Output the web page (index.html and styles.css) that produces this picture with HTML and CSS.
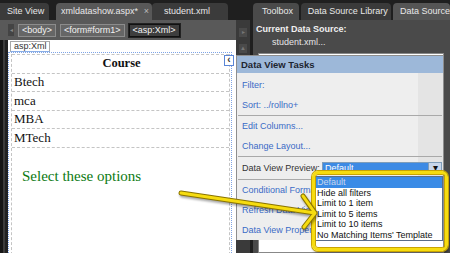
FILE: index.html
```html
<!DOCTYPE html>
<html>
<head>
<meta charset="utf-8">
<link rel="stylesheet" href="styles.css">
</head>
<body>
<div class="app">
  <div class="editor">
    <div class="tabs">
      <div class="tab tab-site">Site View</div>
      <div class="tab tab-active">xmldatashow.aspx*<span class="close">×</span></div>
      <div class="tab tab-student">student.xml</div>
    </div>
    <div class="editor-body">
      <div class="main-col">
        <div class="crumbs">
          <span class="crumb-arrow">◂</span>
          <span class="crumb">&lt;body&gt;</span>
          <span class="crumb">&lt;form#form1&gt;</span>
          <span class="crumb crumb-sel">&lt;asp:Xml&gt;</span>
        </div>
        <div class="doc-area">
          <div class="gutter"></div>
          <div class="doc">
            <div class="xml-label">asp:Xml</div>
            <div class="xml-box">
              <div class="xml-inner">
                <table class="grid">
                  <tr><th>Course</th></tr>
                  <tr><td>Btech</td></tr>
                  <tr><td>mca</td></tr>
                  <tr><td>MBA</td></tr>
                  <tr><td>MTech</td></tr>
                </table>
                <p class="note">Select these options</p>
              </div>
            </div>
          </div>
        </div>
      </div>
      <div class="strip">
        <span class="strip-btn strip-right">▸</span>
        <span class="strip-btn strip-up">▲</span>
      </div>
    </div>
  </div>
  <div class="side">
    <div class="tabs side-tabs">
      <div class="tab tab-toolbox">Toolbox</div>
      <div class="tab tab-lib">Data Source Library</div>
      <div class="tab tab-ds">Data Source</div>
    </div>
    <div class="panel">
      <div class="ds-title">Current Data Source:</div>
      <div class="ds-name">student.xml...</div>
      <div class="ds-box"></div>
    </div>
  </div>

  <div class="smart-btn">‹</div>
  <div class="tasks">
    <div class="tasks-head">Data View Tasks</div>
    <div class="tasks-body">
      <div class="task">Filter:</div>
      <div class="task">Sort: ../rollno+</div>
      <div class="sep"></div>
      <div class="task">Edit Columns...</div>
      <div class="task">Change Layout...</div>
      <div class="sep"></div>
      <div class="task task-preview">
        <span class="preview-label">Data View Preview:</span>
        <span class="select"><span class="select-value">Default</span><span class="select-btn">▾</span></span>
      </div>
      <div class="sep"></div>
      <div class="task">Conditional Formatting...</div>
      <div class="task">Refresh Data View</div>
      <div class="task">Data View Properties...</div>
    </div>
  </div>

  <ul class="options">
    <li class="opt-sel">Default</li>
    <li>Hide all filters</li>
    <li>Limit to 1 item</li>
    <li>Limit to 5 items</li>
    <li>Limit to 10 items</li>
    <li>No Matching Items' Template</li>
  </ul>

  <div class="highlight"></div>
  <svg class="arrow" width="450" height="253" viewBox="0 0 450 253">
    <g fill="none" stroke-linecap="round" stroke-linejoin="round">
      <path d="M181 193 L315 213 M303 196 L315 213 L304 227" stroke="#8a7400" stroke-width="5"/>
      <path d="M181 193 L315 213 M303 196 L315 213 L304 227" stroke="#f6dc10" stroke-width="3"/>
    </g>
  </svg>
</div>
</body>
</html>
```

FILE: styles.css
```css
* { box-sizing: border-box; }
html, body { margin: 0; padding: 0; }
body {
  width: 450px;
  height: 253px;
  overflow: hidden;
  background: #1f1f1f;
  font-family: "Liberation Sans", Arial, sans-serif;
}
.app {
  position: relative;
  display: flex;
  width: 450px;
  height: 253px;
  overflow: hidden;
  background: #1f1f1f;
}

/* tabs */
.tabs {
  height: 20px;
  display: flex;
  align-items: flex-end;
  background: #1f1f1f;
  flex: none;
}
.tab {
  height: 17px;
  line-height: 17px;
  font-size: 9px;
  color: #e8e8e8;
  white-space: nowrap;
  border-radius: 4px 4px 0 0;
}
.tab-site {
  width: 49px;
  padding-left: 7px;
  background: #3b3b3b;
  border-radius: 0 4px 0 0;
  margin-right: 7px;
}
.tab-active {
  width: 96px;
  padding-left: 5px;
  background: #585858;
  display: flex;
  justify-content: space-between;
  padding-right: 3px;
}
.close { color: #bbb; font-size: 9px; }
.tab-student {
  width: 76px;
  padding-left: 12px;
  background: #3b3b3b;
}

.editor {
  width: 250px;
  display: flex;
  flex-direction: column;
  flex: none;
}
.editor-body {
  flex: 1;
  display: flex;
}
.main-col {
  width: 236px;
  display: flex;
  flex-direction: column;
}
.crumbs {
  height: 20px;
  background: #595959;
  display: flex;
  align-items: center;
  padding-left: 8px;
  gap: 4px;
  flex: none;
}
.crumb-arrow {
  width: 6px;
  height: 12px;
  background: #444;
  color: #888;
  font-size: 6px;
  line-height: 12px;
  text-align: center;
}
.crumb {
  height: 13px;
  line-height: 11px;
  font-size: 9px;
  color: #f2f2f2;
  background: #666;
  border: 1px solid #8c8c8c;
  padding: 0 3px;
}
.crumb-sel {
  background: #3e3e3e;
  border: 1px solid #111;
  box-shadow: 0 0 0 1px #222;
}
.doc-area {
  flex: 1;
  display: flex;
}
.gutter {
  width: 8px;
  background: linear-gradient(to right, #161616 0 3px, #3c3c3c 3px 5px, #232323 5px);
}
.doc {
  width: 228px;
  background: #fff;
  padding-top: 1px;
}
.xml-label {
  width: fit-content;
  margin-left: 2px;
  height: 11px;
  line-height: 9px;
  font-size: 9px;
  color: #333;
  padding: 0 2px 0 3px;
  border: 1px solid #a8a8a8;
  border-bottom-color: #8aaee6;
}
.xml-box {
  height: 203px;
  border-left: 1px dotted #7ea4e6;
  border-right: 1px dotted #7ea4e6;
  border-top: 1px dotted #7ea4e6;
  margin-right: 4px;
  padding: 1px 1px 0 2px;
}
.xml-inner {
  height: 100%;
  border-left: 1px dashed #c4c4c4;
  border-right: 1px dashed #c4c4c4;
}
.grid {
  width: 100%;
  border-collapse: collapse;
  font-family: "Liberation Serif", "Times New Roman", serif;
  color: #111;
}
.grid th, .grid td {
  height: 18.5px;
  padding: 0 0 0 2px;
  border-bottom: 1px dashed #c4c4c4;
  border-top: 1px dashed #c4c4c4;
}
.grid th { font-size: 12.5px; text-align: center; font-weight: bold; }
.grid td { font-size: 13px; text-align: left; }
.note {
  margin: 20px 0 0 10px;
  font-family: "Liberation Serif", "Times New Roman", serif;
  font-size: 15px;
  color: #0c7a12;
}

.strip {
  width: 14px;
  background: #3a3a3a;
  display: flex;
  flex-direction: column;
  align-items: center;
  padding-top: 8px;
  gap: 7px;
}
.strip-btn {
  width: 8px;
  height: 9px;
  background: #4a4a4a;
  color: #777;
  font-size: 6px;
  line-height: 9px;
  text-align: center;
}

/* side panel */
.side {
  width: 200px;
  flex: none;
  display: flex;
  flex-direction: column;
  padding-left: 3px;
}
.tab-toolbox {
  width: 48px;
  padding-left: 9px;
  background: #4a4a4a;
  margin-right: 2px;
}
.tab-lib {
  width: 95px;
  padding-left: 7px;
  background: #3a3a3a;
  margin-right: 2px;
}
.tab-ds {
  width: 60px;
  padding-left: 7px;
  background: #555;
}
.panel {
  flex: 1;
  background: #4a4a4a;
  padding: 4px 0 0 3px;
}
.ds-title {
  font-size: 9px;
  font-weight: bold;
  color: #f0f0f0;
  height: 12px;
}
.ds-name {
  font-size: 9px;
  color: #e6e6e6;
  padding-left: 16px;
  height: 12px;
  margin-top: 1px;
}
.ds-box {
  margin: 4px 6px 0 2px;
  height: 200px;
  background: #fff;
  border: 1px solid #888;
}

/* smart tag & tasks popup */
.smart-btn {
  position: absolute;
  left: 224px;
  top: 55px;
  width: 10px;
  height: 11px;
  background: #fff;
  border: 1px solid #5b86d6;
  font-size: 10px;
  line-height: 8px;
  text-align: center;
  font-weight: bold;
  color: #333;
}
.tasks {
  position: absolute;
  left: 236px;
  top: 55px;
  width: 208px;
  height: 185px;
  background: #eeeeee;
  border: 1px solid #8e8e8e;
  font-size: 9px;
}
.tasks-head {
  height: 17px;
  line-height: 17px;
  background: #9db8d9;
  font-weight: bold;
  color: #1d2530;
  padding-left: 4px;
  font-size: 9.5px;
}
.tasks-body {
  padding: 2px 1px 0 1px;
  background: linear-gradient(to right, #eeeeee 0 88%, #e4e4e4 88% 100%);
}
.task {
  height: 20px;
  line-height: 20px;
  color: #3a6bc6;
  padding-left: 4px;
  white-space: nowrap;
  overflow: hidden;
}
.sep {
  height: 1px;
  background: #a9a9a9;
}
.task-preview {
  height: 22px;
  line-height: 22px;
  display: flex;
  align-items: center;
}
.preview-label { color: #333; width: 82px; }
.select {
  display: flex;
  height: 12px;
  border: 1px solid #7f9db9;
  background: #fff;
}
.select-value {
  width: 105px;
  background: #3d8ae4;
  color: #fff;
  line-height: 10px;
  padding-left: 2px;
}
.select-btn {
  width: 13px;
  background: #c8d6ea;
  color: #111;
  line-height: 10px;
  text-align: center;
  font-size: 10px;
  border-left: 1px solid #7f9db9;
}

.options {
  position: absolute;
  left: 315px;
  top: 176px;
  width: 128px;
  height: 65px;
  margin: 0;
  padding: 0;
  list-style: none;
  background: #fff;
  border: 1px solid #5a6d86;
  font-size: 9px;
  color: #111;
}
.options li {
  height: 10.6px;
  line-height: 10.6px;
  padding-left: 1px;
  white-space: nowrap;
}
.options .opt-sel {
  background: #3a8be6;
  color: #c9d8ee;
}
.highlight {
  position: absolute;
  left: 312px;
  top: 171px;
  width: 136px;
  height: 80px;
  border: 3px solid #f6dc10;
  border-radius: 6px;
  box-shadow: 0 0 0 1px #c9a400, inset 0 0 0 1px #c9a400, 1px 2px 3px rgba(0,0,0,0.45);
}
.arrow {
  position: absolute;
  left: 0;
  top: 0;
  pointer-events: none;
  filter: drop-shadow(1px 2px 1px rgba(0,0,0,0.35));
}
```
